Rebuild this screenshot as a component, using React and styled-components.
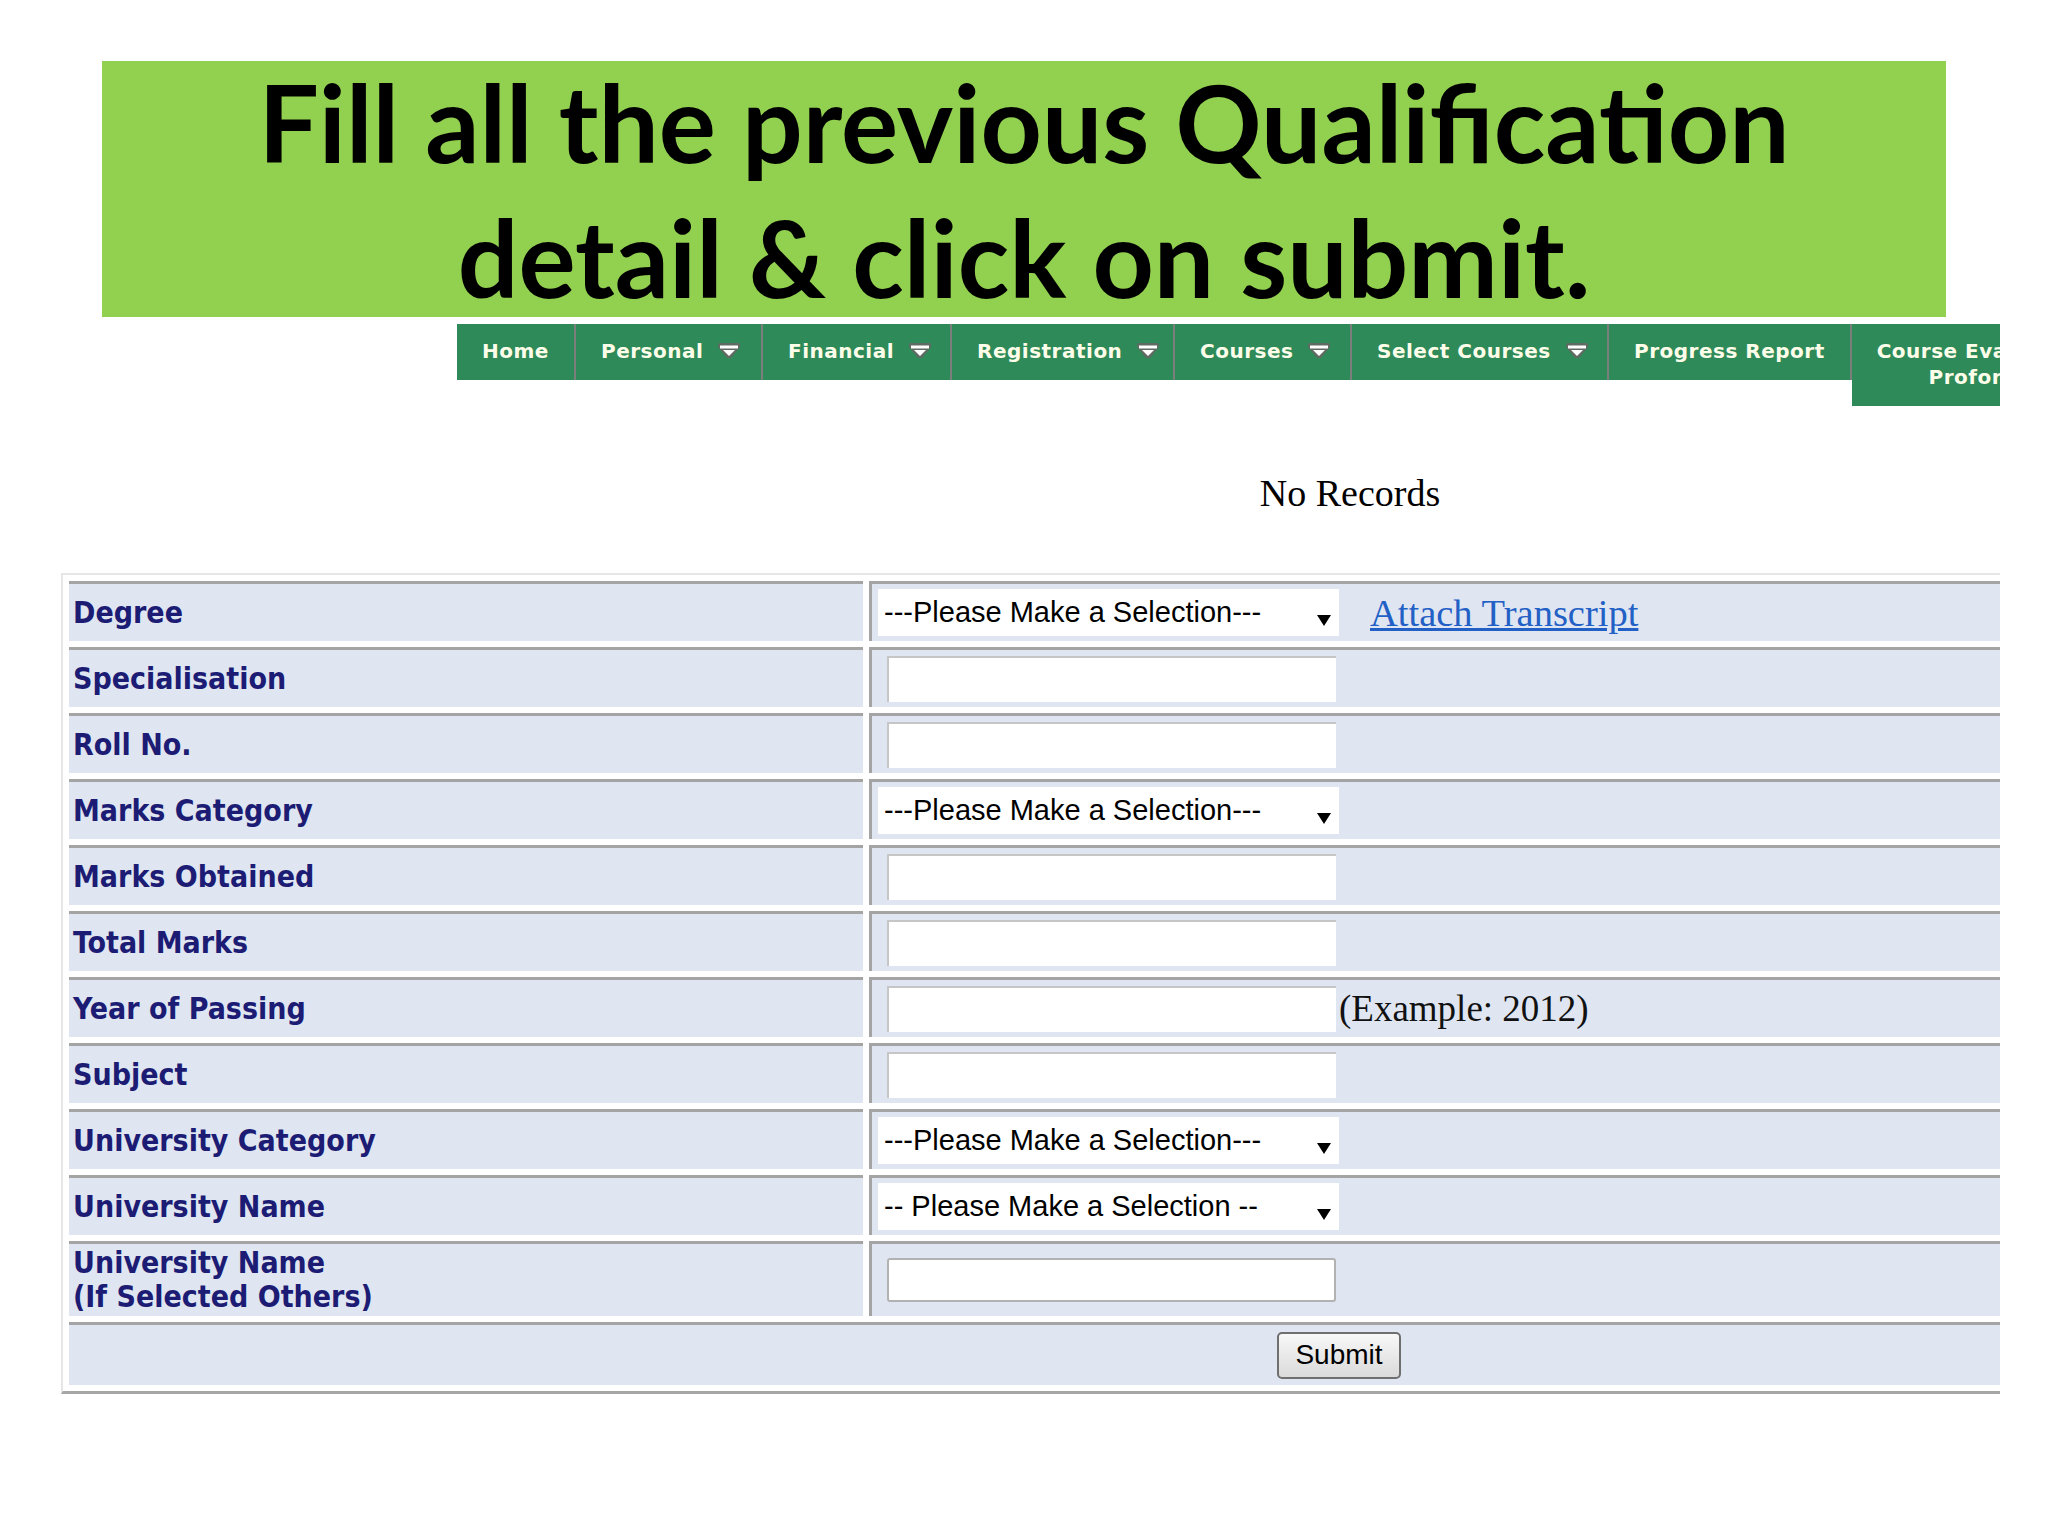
import React from 'react';
import styled, { createGlobalStyle } from 'styled-components';

const Global = createGlobalStyle`
  html, body { margin: 0; padding: 0; background: #ffffff; }
  body { width: 2048px; height: 1536px; overflow: hidden; }
  * { box-sizing: border-box; }
`;

const Slide = styled.div`
  width: 2048px;
  height: 1536px;
  background: #ffffff;
  display: flex;
  flex-direction: column;
`;

const Banner = styled.div`
  margin: 61px 0 0 102px;
  width: 1844px;
  height: 256px;
  background: #92d050;
  display: flex;
  flex-direction: column;
  justify-content: center;
  align-items: center;
  font-family: Lato, "Open Sans", sans-serif;
  font-weight: 700;
  font-size: 107px;
  line-height: 135px;
  color: #000;
  text-align: center;
`;

const BannerLine = styled.span`
  display: block;
  white-space: nowrap;
`;

const Viewport = styled.div`
  margin: 7px 0 0 60px;
  width: 1940px;
  overflow: hidden;
`;

const Page = styled.div`
  width: 2580px;
  display: flex;
  flex-direction: column;
`;

const Nav = styled.nav`
  margin-left: 397px;
  display: flex;
  align-items: flex-start;
`;

const NavItem = styled.div`
  flex: none;
  width: ${(p) => p.$w}px;
  background: #2e8a58;
  padding: 14px 0 16px 25px;
  border-right: 2px solid #7b7f7c;
  color: #fdfdea;
  font-family: "DejaVu Sans", Verdana, sans-serif;
  font-weight: 700;
  font-size: 20px;
  line-height: 26px;
  letter-spacing: 0.5px;
  display: flex;
  align-items: center;
  gap: 14px;
  white-space: nowrap;
  ${(p) => p.$wrap && `
    padding: 14px 8px 16px;
    white-space: normal;
    text-align: center;
    justify-content: center;
    border-right: none;
  `}
`;

const NavArrow = () => (
  <svg width="24" height="16" viewBox="0 0 24 16">
    <path d="M1 2 Q1 0 3 0 H21 Q23 0 23 2 V4 L14 15 H10 L1 4 Z" fill="#5f6a63" />
    <rect x="3" y="2.5" width="18" height="3" fill="#ffffff" />
    <path d="M6 7 H18 L12 13 Z" fill="#ffffff" />
  </svg>
);

const NoRecords = styled.div`
  margin-top: 65px;
  text-align: center;
  font-family: "Liberation Serif", "Times New Roman", serif;
  font-size: 38px;
  line-height: 45px;
  color: #000;
`;

const FormTable = styled.table`
  margin: 57px 0 0 1px;
  width: 2562px;
  border-collapse: separate;
  border-spacing: 6px;
  border-top: 2px solid #e6e6e6;
  border-left: 2px solid #e6e6e6;
  border-bottom: 3px solid #a6a6a6;
  border-right: none;
`;

const LabelCell = styled.td`
  width: 794px;
  height: ${(p) => p.$h || 60}px;
  background: #dfe6f2;
  border-top: 3px solid #a4a4a4;
  padding: 0 0 0 4px;
  vertical-align: middle;
  font-family: "DejaVu Sans Condensed", "DejaVu Sans", sans-serif;
  font-stretch: condensed;
  font-weight: 700;
  font-size: 30px;
  line-height: 34px;
  color: #1c1c74;
  white-space: nowrap;
`;

const ValueCell = styled.td`
  height: ${(p) => p.$h || 60}px;
  background: #dfe6f2;
  border-top: 3px solid #a4a4a4;
  border-left: 3px solid #a4a4a4;
  padding: 0 0 0 6px;
  vertical-align: middle;
`;

const SubmitCell = styled.td`
  height: 63px;
  background: #dfe6f2;
  border-top: 3px solid #a4a4a4;
  text-align: center;
  vertical-align: middle;
  padding: 0 8px 0 0;
`;

const Field = styled.div`
  display: flex;
  align-items: center;
`;

const SelectBox = styled.div`
  width: 461px;
  height: 47px;
  background: #ffffff;
  display: flex;
  align-items: center;
  padding-left: 6px;
  font-family: "Liberation Sans", Arial, sans-serif;
  font-size: 29px;
  color: #000;
  white-space: nowrap;
`;

const SelectArrow = styled.svg`
  margin-left: auto;
  margin-right: 8px;
  align-self: flex-end;
  margin-bottom: 10px;
`;

const TextInput = styled.input`
  margin-left: 9px;
  width: 449px;
  height: ${(p) => (p.$boxed ? 44 : 46)}px;
  background: #ffffff;
  border: none;
  border-top: 2px solid #c6c6c6;
  border-left: 2px solid #c6c6c6;
  outline: none;
  ${(p) => p.$boxed && `
    border: 2px solid #b2b2b2;
    border-radius: 3px;
  `}
`;

const TranscriptLink = styled.a`
  margin-left: 31px;
  font-family: "Liberation Serif", "Times New Roman", serif;
  font-size: 38.5px;
  color: #2360c6;
  text-decoration: underline;
  white-space: nowrap;
`;

const Hint = styled.span`
  margin-left: 3px;
  font-family: "Liberation Serif", "Times New Roman", serif;
  font-size: 37px;
  color: #111;
  white-space: nowrap;
`;

const SubmitButton = styled.button`
  width: 124px;
  height: 47px;
  border: 2px solid #6f6f6f;
  border-radius: 5px;
  background: linear-gradient(#f8f8f8, #dadada);
  font-family: "Liberation Sans", Arial, sans-serif;
  font-size: 28px;
  color: #000;
  padding: 0;
`;

const Select = ({ text }) => (
  <SelectBox>
    {text}
    <SelectArrow width="14" height="11" viewBox="0 0 14 11">
      <path d="M0 0 H14 L7 11 Z" fill="#000" />
    </SelectArrow>
  </SelectBox>
);

const navItems = [
  { label: 'Home', w: 119 },
  { label: 'Personal', w: 187, arrow: true },
  { label: 'Financial', w: 189, arrow: true },
  { label: 'Registration', w: 223, arrow: true },
  { label: 'Courses', w: 177, arrow: true },
  { label: 'Select Courses', w: 257, arrow: true },
  { label: 'Progress Report', w: 243 },
];

const SEL = '---Please Make a Selection---';

const rows = [
  { label: 'Degree', type: 'select', text: SEL, link: 'Attach Transcript' },
  { label: 'Specialisation', type: 'input' },
  { label: 'Roll No.', type: 'input' },
  { label: 'Marks Category', type: 'select', text: SEL },
  { label: 'Marks Obtained', type: 'input' },
  { label: 'Total Marks', type: 'input' },
  { label: 'Year of Passing', type: 'input', hint: '(Example: 2012)' },
  { label: 'Subject', type: 'input' },
  { label: 'University Category', type: 'select', text: SEL },
  { label: 'University Name', type: 'select', text: '-- Please Make a Selection --' },
  { label: ['University Name', '(If Selected Others)'], type: 'boxed', h: 75 },
];

export default function App() {
  return (
    <>
      <Global />
      <Slide>
        <Banner>
          <BannerLine>Fill all the previous Qualification</BannerLine>
          <BannerLine>detail &amp; click on submit.</BannerLine>
        </Banner>
        <Viewport>
          <Page>
            <Nav>
              {navItems.map((n) => (
                <NavItem key={n.label} $w={n.w}>
                  <span>{n.label}</span>
                  {n.arrow && <NavArrow />}
                </NavItem>
              ))}
              <NavItem $w={262} $wrap>Course Evaluation Proforma</NavItem>
            </Nav>
            <NoRecords>No Records</NoRecords>
            <FormTable>
              <tbody>
                {rows.map((r, i) => (
                  <tr key={i}>
                    <LabelCell $h={r.h}>
                      {Array.isArray(r.label) ? (
                        <>
                          {r.label[0]}
                          <br />
                          {r.label[1]}
                        </>
                      ) : (
                        r.label
                      )}
                    </LabelCell>
                    <ValueCell $h={r.h}>
                      <Field>
                        {r.type === 'select' && <Select text={r.text} />}
                        {r.type === 'input' && <TextInput type="text" />}
                        {r.type === 'boxed' && <TextInput type="text" $boxed />}
                        {r.link && <TranscriptLink href="#">{r.link}</TranscriptLink>}
                        {r.hint && <Hint>{r.hint}</Hint>}
                      </Field>
                    </ValueCell>
                  </tr>
                ))}
                <tr>
                  <SubmitCell colSpan={2}>
                    <SubmitButton type="button">Submit</SubmitButton>
                  </SubmitCell>
                </tr>
              </tbody>
            </FormTable>
          </Page>
        </Viewport>
      </Slide>
    </>
  );
}
